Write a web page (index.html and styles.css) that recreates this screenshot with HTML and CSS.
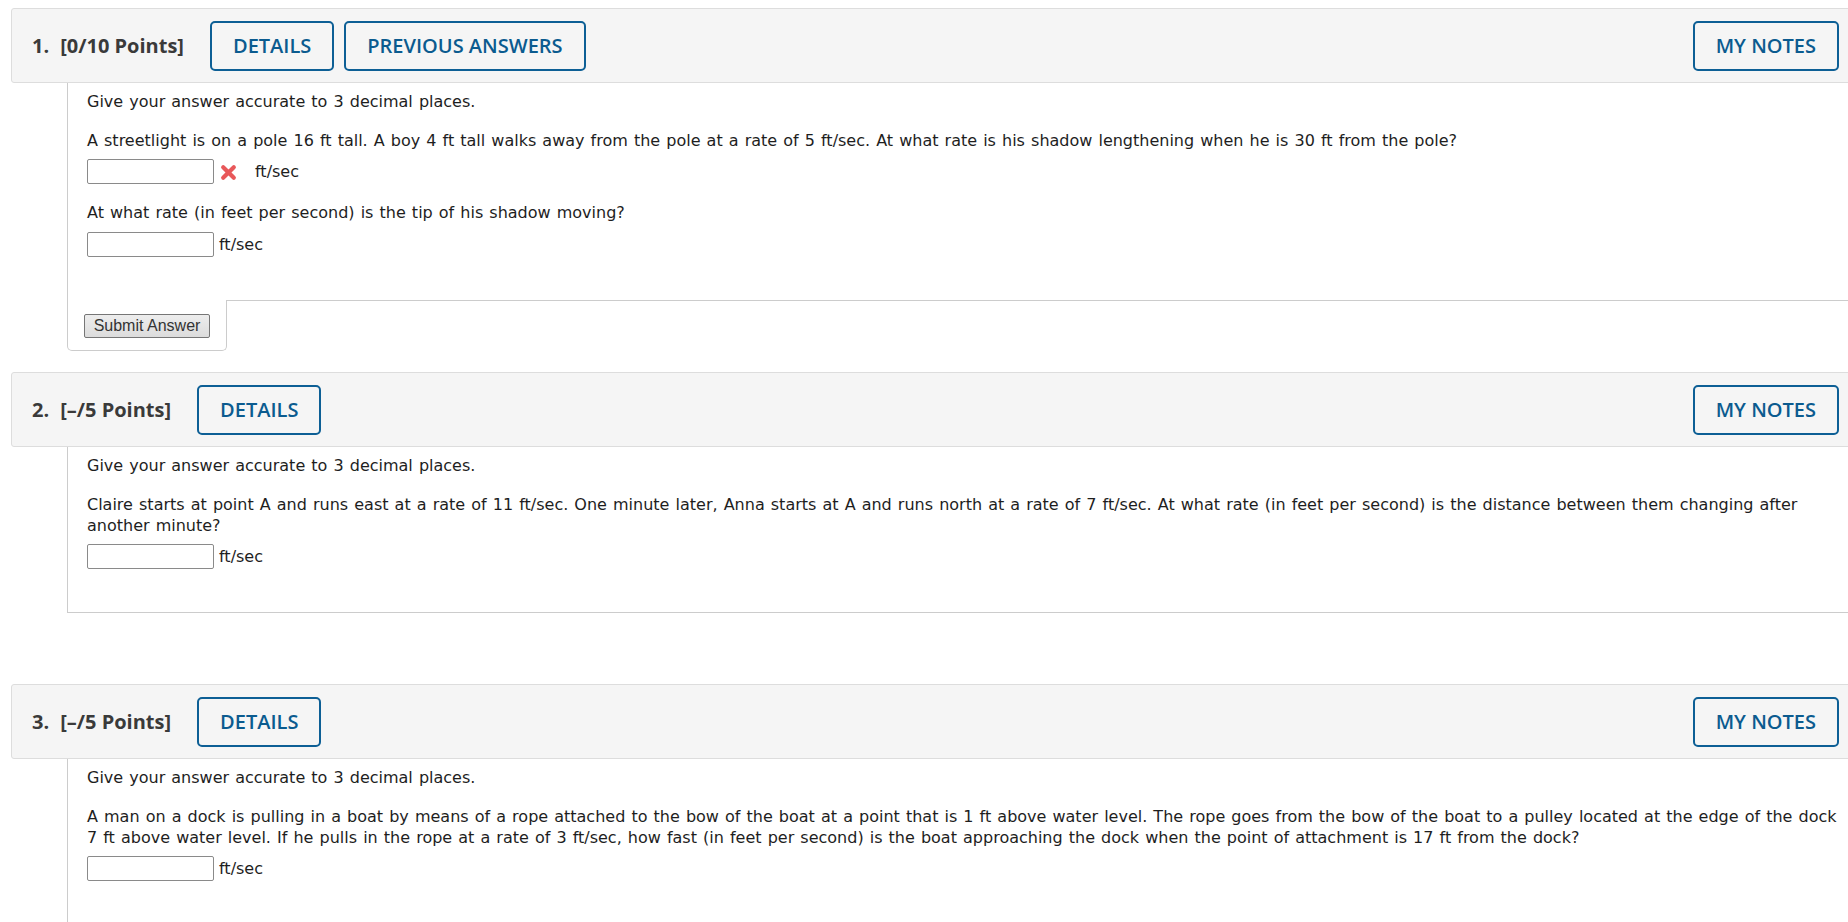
FILE: index.html
```html
<!DOCTYPE html>
<html>
<head>
<meta charset="utf-8">
<link rel="stylesheet" href="styles.css">
</head>
<body>
<div class="page">

  <div class="q">
    <div class="qhead">
      <span class="qnum">1.</span>
      <span class="qpts">[0/10 Points]</span>
      <button class="hbtn first">DETAILS</button>
      <button class="hbtn">PREVIOUS ANSWERS</button>
      <span class="spacer"></span>
      <button class="hbtn">MY NOTES</button>
    </div>
    <div class="qbody open">
      <p class="line">Give your answer accurate to 3 decimal places.</p>
      <p class="line gap">A streetlight is on a pole 16 ft tall. A boy 4 ft tall walks away from the pole at a rate of 5 ft/sec. At what rate is his shadow lengthening when he is 30 ft from the pole?</p>
      <div class="ansrow">
        <span class="ans"></span>
        <svg class="wrong" width="17" height="17" viewBox="0 0 17 17"><path d="M3.2 3.2 L13.8 13.8 M13.8 3.2 L3.2 13.8" stroke="#e8585a" stroke-width="4.2" stroke-linecap="round"/></svg>
        <span class="unit wide">ft/sec</span>
      </div>
      <p class="line gap">At what rate (in feet per second) is the tip of his shadow moving?</p>
      <div class="ansrow tight">
        <span class="ans"></span>
        <span class="unit">ft/sec</span>
      </div>
    </div>
    <div class="qfoot">
      <div class="tab"><button class="submit">Submit Answer</button></div>
      <div class="fill"></div>
    </div>
  </div>

  <div class="q q2">
    <div class="qhead">
      <span class="qnum">2.</span>
      <span class="qpts">[–/5 Points]</span>
      <button class="hbtn first">DETAILS</button>
      <span class="spacer"></span>
      <button class="hbtn">MY NOTES</button>
    </div>
    <div class="qbody closed">
      <p class="line">Give your answer accurate to 3 decimal places.</p>
      <p class="line gap">Claire starts at point A and runs east at a rate of 11 ft/sec. One minute later, Anna starts at A and runs north at a rate of 7 ft/sec. At what rate (in feet per second) is the distance between them changing after another minute?</p>
      <div class="ansrow">
        <span class="ans"></span>
        <span class="unit">ft/sec</span>
      </div>
    </div>
  </div>

  <div class="q q3">
    <div class="qhead">
      <span class="qnum">3.</span>
      <span class="qpts">[–/5 Points]</span>
      <button class="hbtn first">DETAILS</button>
      <span class="spacer"></span>
      <button class="hbtn">MY NOTES</button>
    </div>
    <div class="qbody last">
      <p class="line">Give your answer accurate to 3 decimal places.</p>
      <p class="line gap">A man on a dock is pulling in a boat by means of a rope attached to the bow of the boat at a point that is 1 ft above water level. The rope goes from the bow of the boat to a pulley located at the edge of the dock 7 ft above water level. If he pulls in the rope at a rate of 3 ft/sec, how fast (in feet per second) is the boat approaching the dock when the point of attachment is 17 ft from the dock?</p>
      <div class="ansrow">
        <span class="ans"></span>
        <span class="unit">ft/sec</span>
      </div>
    </div>
  </div>

</div>
</body>
</html>
```

FILE: styles.css
```css
html, body {
  margin: 0;
  padding: 0;
  background: #ffffff;
  overflow: hidden;
}

body {
  padding: 8px 0 0 11px;
  font-family: "DejaVu Sans", Verdana, sans-serif;
  color: #1e1e1e;
}

.page {
  width: 1842px;
}

.q2 {
  margin-top: 21px;
}

.q3 {
  margin-top: 71px;
}

.qhead {
  display: flex;
  align-items: center;
  height: 73px;
  background: #f5f5f5;
  border: 1px solid #dddddd;
  border-radius: 3px;
  padding: 0 13px 0 20px;
  font-family: "Open Sans", sans-serif;
}

.qnum {
  font-size: 20px;
  font-weight: 700;
  color: #3a3a3a;
  margin-right: 11px;
}

.qpts {
  font-size: 20px;
  font-weight: 700;
  color: #3a3a3a;
}

.spacer {
  flex: 1;
}

.hbtn {
  height: 50px;
  padding: 0 21px;
  margin-left: 10px;
  background: transparent;
  border: 2px solid #0d5f95;
  border-radius: 5px;
  font-family: "Open Sans", sans-serif;
  font-size: 20px;
  font-weight: 600;
  color: #0b5b8f;
  cursor: pointer;
}

.hbtn.first {
  margin-left: 26px;
}

.qbody {
  margin-left: 56px;
  border-left: 1px solid #cccccc;
  padding: 8px 5px 0 19px;
}

.qbody.open {
  padding-bottom: 43px;
}

.qbody.closed {
  padding-bottom: 43px;
  border-bottom: 1px solid #cccccc;
}

.qbody.last {
  padding-bottom: 60px;
}

.line {
  margin: 0;
  font-size: 16px;
  line-height: 21px;
  word-spacing: 1px;
}

.line.gap {
  margin-top: 18px;
}

.ansrow {
  display: flex;
  align-items: center;
  height: 25px;
  margin-top: 8px;
  font-size: 16px;
}

.ansrow.tight {
  margin-top: 9px;
}

.ans {
  display: block;
  width: 125px;
  height: 23px;
  border: 1px solid #8a8a8a;
  border-radius: 2px;
  background: #ffffff;
}

.wrong {
  margin-left: 6px;
  margin-top: 2px;
}

.unit {
  margin-left: 5px;
  line-height: 21px;
}

.unit.wide {
  margin-left: 18px;
}

.qfoot {
  display: flex;
  margin-left: 56px;
}

.tab {
  width: 160px;
  height: 51px;
  border: 1px solid #cccccc;
  border-top: none;
  border-radius: 0 0 5px 5px;
  padding: 14px 0 0 16px;
  box-sizing: border-box;
}

.fill {
  flex: 1;
  border-top: 1px solid #cccccc;
}

.submit {
  display: block;
  width: 126px;
  height: 24px;
  padding: 0;
  border: 1px solid #767676;
  border-radius: 2px;
  background: linear-gradient(#ededed, #dcdcdc);
  font-family: "Liberation Sans", Arial, sans-serif;
  font-size: 16px;
  color: #333333;
}
```
